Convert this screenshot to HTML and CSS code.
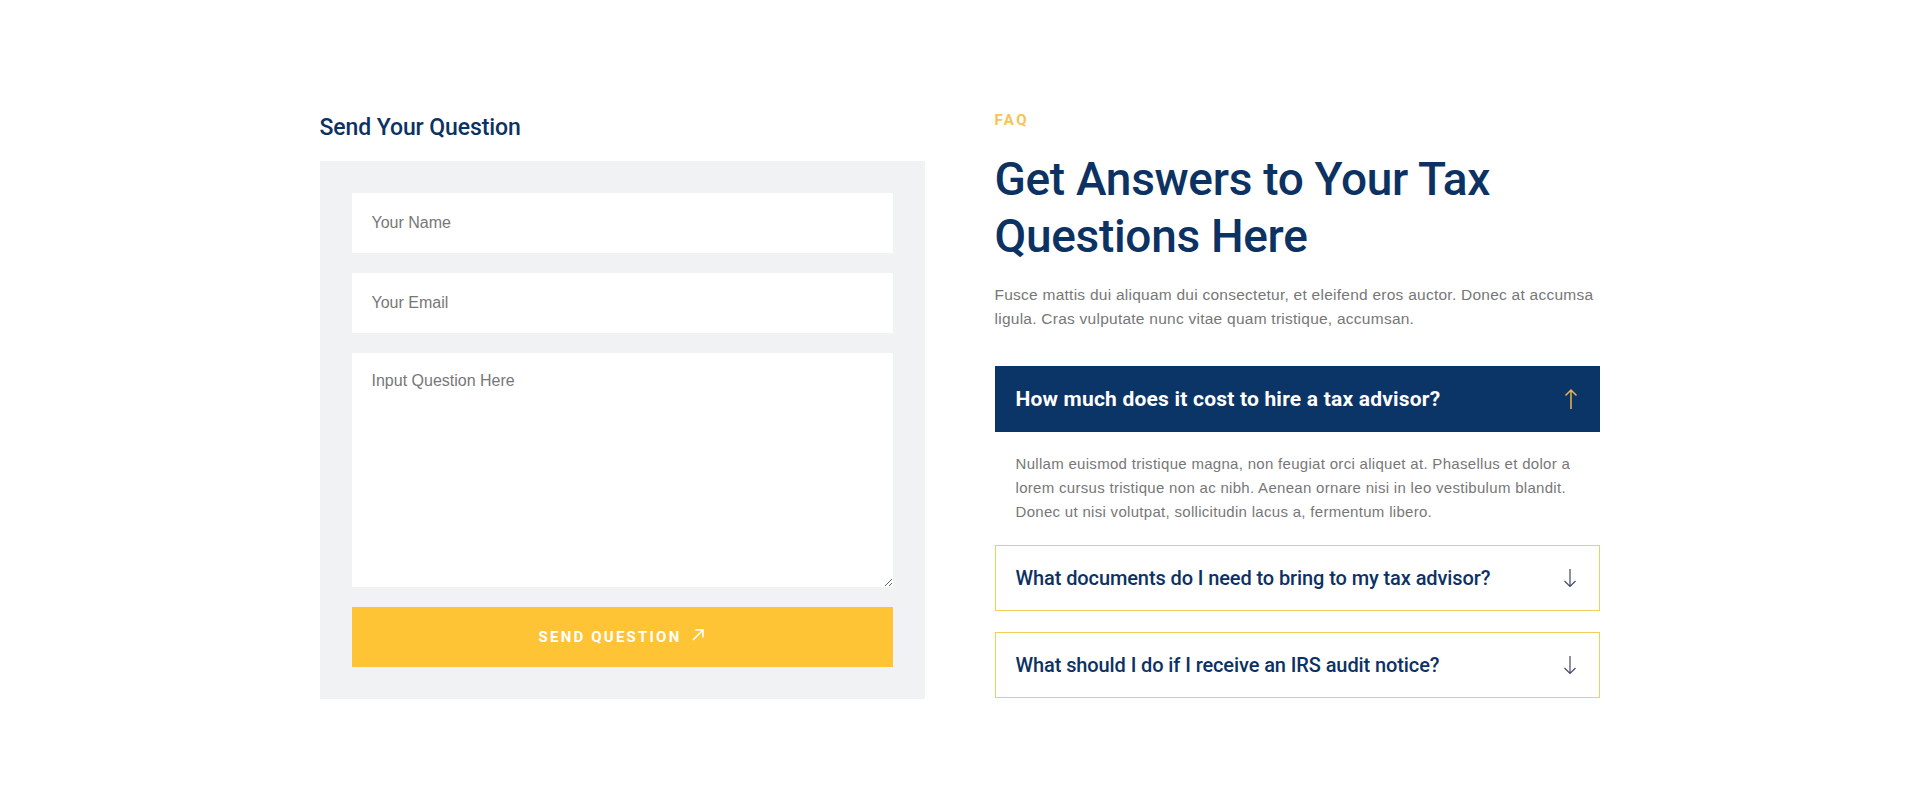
FILE: index.html
```html
<!DOCTYPE html>
<html lang="en">
<head>
<meta charset="utf-8">
<title>FAQ - Send Your Question</title>
<link rel="stylesheet" href="styles.css">
</head>
<body>
<section class="faq-section">
  <div class="container">
    <div class="form-col">
      <h3 class="form-title">Send Your Question</h3>
      <form class="form-box">
        <input class="field" type="text" placeholder="Your Name">
        <input class="field" type="email" placeholder="Your Email">
        <textarea class="field area" placeholder="Input Question Here"></textarea>
        <button class="send-btn" type="button">SEND QUESTION
          <svg class="btn-arrow" width="14" height="14" viewBox="0 0 14 14"><path d="M2 12 L12 2 M4.5 2 H12 V9.5" fill="none" stroke="#fff" stroke-width="1.6"/></svg>
        </button>
      </form>
    </div>
    <div class="faq-col">
      <div class="eyebrow">FAQ</div>
      <h2 class="faq-title">Get Answers to Your Tax Questions Here</h2>
      <p class="faq-intro">Fusce mattis dui aliquam dui consectetur, et eleifend eros auctor. Donec at accumsa ligula. Cras vulputate nunc vitae quam tristique, accumsan.</p>
      <div class="accordion">
        <div class="acc-item open">
          <div class="acc-head">
            <span>How much does it cost to hire a tax advisor?</span>
            <svg class="acc-icon" width="14" height="22" viewBox="0 0 14 22"><path d="M7 21 V2 M1.5 7.5 L7 2 L12.5 7.5" fill="none" stroke="#e9b552" stroke-width="1.5"/></svg>
          </div>
          <div class="acc-body">Nullam euismod tristique magna, non feugiat orci aliquet at. Phasellus et dolor a lorem cursus tristique non ac nibh. Aenean ornare nisi in leo vestibulum blandit. Donec ut nisi volutpat, sollicitudin lacus a, fermentum libero.</div>
        </div>
        <div class="acc-item">
          <div class="acc-head">
            <span>What documents do I need to bring to my tax advisor?</span>
            <svg class="acc-icon" width="14" height="20" viewBox="0 0 14 20"><path d="M7 1 V18.5 M1.5 13 L7 18.5 L12.5 13" fill="none" stroke="#44486a" stroke-width="1.2"/></svg>
          </div>
        </div>
        <div class="acc-item">
          <div class="acc-head">
            <span>What should I do if I receive an IRS audit notice?</span>
            <svg class="acc-icon" width="14" height="20" viewBox="0 0 14 20"><path d="M7 1 V18.5 M1.5 13 L7 18.5 L12.5 13" fill="none" stroke="#44486a" stroke-width="1.2"/></svg>
          </div>
        </div>
      </div>
    </div>
  </div>
</section>
</body>
</html>
```
FILE: styles.css
```css
* { box-sizing: border-box; }
html, body { margin: 0; padding: 0; background: #fff; }
body { font-family: "Liberation Sans", Arial, sans-serif; color: #777; }

.faq-section { padding-top: 110px; }
.container {
  width: 1280px;
  margin: 0 auto;
  display: grid;
  grid-template-columns: 605px 605px;
  column-gap: 70px;
  align-items: start;
}

.form-title {
  margin: 3px 0 18px;
  font-family: Roboto, "Noto Sans", sans-serif;
  font-weight: 500;
  font-size: 23px;
  line-height: 30px;
  color: #0c3264;
  letter-spacing: -0.1px;
}
.form-box {
  background: #f1f2f4;
  padding: 32px;
  display: flex;
  flex-direction: column;
  gap: 20px;
}
.field {
  display: block;
  width: 100%;
  height: 60px;
  border: 0;
  background: #fff;
  padding: 0 20px;
  font-family: "Liberation Sans", Arial, sans-serif;
  font-size: 16px;
  color: #555;
  outline: none;
}
.field::placeholder { color: #777; }
.area {
  height: 234px;
  padding: 18px 20px;
  line-height: 20px;
  resize: vertical;
}
.send-btn {
  height: 60px;
  border: 0;
  background: #fec436;
  color: #fff;
  font-family: Roboto, "Noto Sans", sans-serif;
  font-weight: 700;
  font-size: 15px;
  letter-spacing: 2.2px;
  display: flex;
  align-items: center;
  justify-content: center;
  gap: 10px;
  cursor: pointer;
}
.btn-arrow { margin-top: -4px; }

.eyebrow {
  font-family: Roboto, "Noto Sans", sans-serif;
  font-weight: 700;
  font-size: 15px;
  line-height: 20px;
  letter-spacing: 2.4px;
  color: #f8c352;
}
.faq-title {
  margin: 21px 0 18px;
  font-family: Roboto, "Noto Sans", sans-serif;
  font-weight: 500;
  font-size: 46px;
  line-height: 57px;
  letter-spacing: -0.3px;
  color: #0c3264;
}
.faq-intro {
  margin: 0 0 35px;
  font-size: 15.5px;
  line-height: 24px;
  letter-spacing: 0.25px;
  color: #777;
}
.accordion { display: flex; flex-direction: column; gap: 21px; }
.acc-item { border: 1px solid #f3cd5e; }
.acc-item.open { border: 0; }
.acc-head {
  height: 64px;
  padding: 0 22px 0 20px;
  display: flex;
  align-items: center;
  justify-content: space-between;
  font-family: Roboto, "Noto Sans", sans-serif;
  font-weight: 500;
  font-size: 20px;
  letter-spacing: -0.1px;
  color: #0c3264;
}
.open .acc-head {
  height: 66px;
  padding-left: 21px;
  background: #0b3467;
  color: #fff;
  font-weight: 700;
  font-size: 21px;
  letter-spacing: 0.2px;
}
.acc-icon { flex: none; }
.acc-body {
  padding: 20px 21px 0;
  font-size: 15px;
  line-height: 24px;
  letter-spacing: 0.3px;
  color: #777;
}
```
